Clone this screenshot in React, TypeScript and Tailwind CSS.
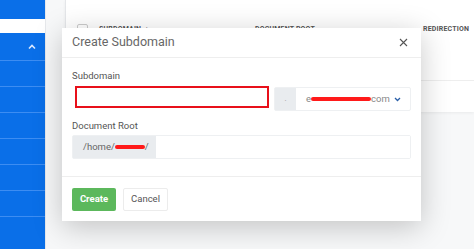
import React from 'react';

const font = { fontFamily: 'Roboto, "Liberation Sans", sans-serif' };

const Sidebar: React.FC = () => {
  const rows = [0, 1, 2, 3, 4, 5, 6];
  return (
    <div className="w-[46px] shrink-0 flex flex-col border-r border-[#e6e8eb]">
      <div className="h-[19px] bg-[#0a6fe8]" />
      <div className="h-[14px] bg-white" />
      <div className="flex-1 bg-[#0a6fe8] flex flex-col">
        <div className="h-[27px] flex items-center justify-end pr-[9px]">
          <svg width="8" height="6" viewBox="0 0 8 6">
            <path d="M1 4.5 L4 1.5 L7 4.5" stroke="#dbe9ff" strokeWidth="1.6" fill="none" />
          </svg>
        </div>
        {rows.map((r) => (
          <div key={r} className="h-[26px] shrink-0 border-t border-[#3d8df2]" />
        ))}
      </div>
    </div>
  );
};

const Redacted: React.FC<{ w: number }> = ({ w }) => (
  <span className="inline-block h-[4px] bg-[#ff1a1a] rounded-full align-middle" style={{ width: w }} />
);

const Modal: React.FC = () => (
  <div className="absolute left-[62px] top-[28px] w-[359px] h-[193px] bg-white shadow-[0_6px_28px_rgba(0,0,0,0.22)] flex flex-col">
    {/* cabecera */}
    <div className="h-[30px] flex items-center justify-between pl-[10px] pr-[13px] border-b border-[#eeeeee]">
      <span className="text-[12.5px] text-[#666]">Create Subdomain</span>
      <svg width="9" height="9" viewBox="0 0 9 9">
        <path d="M1 1 L8 8 M8 1 L1 8" stroke="#555" strokeWidth="1.1" />
      </svg>
    </div>
    {/* cuerpo */}
    <div className="flex-1 px-[10px] pt-[12px] border-b border-[#eeeeee]">
      <div className="text-[9.5px] text-[#555] leading-[12px]">Subdomain</div>
      <div className="flex items-start mt-[4px] h-[25px]">
        <div className="ml-[3px] w-[194px] h-[22px] border-2 border-[#e8101a] bg-white" />
        <div className="ml-[5px] mt-[1px] w-[137px] h-[24px] flex border border-[#eef0f2] rounded-[2px]">
          <div className="w-[21px] bg-[#e9ecef] flex items-center justify-center text-[8px] text-[#999]">.</div>
          <div className="flex-1 flex items-center pl-[10px] pr-[9px] text-[9.5px] text-[#888]">
            <span>e</span>
            <Redacted w={60} />
            <span>com</span>
            <svg className="ml-auto" width="7" height="5" viewBox="0 0 7 5">
              <path d="M1 1 L3.5 3.5 L6 1" stroke="#2a5fa8" strokeWidth="1.3" fill="none" />
            </svg>
          </div>
        </div>
      </div>
      <div className="text-[9.5px] text-[#555] leading-[12px] mt-[9px]">Document Root</div>
      <div className="flex mt-[3px] h-[24px] border border-[#eef0f2] rounded-[2px]">
        <div className="w-[83px] bg-[#e9ecef] flex items-center pl-[10px] text-[9.5px] text-[#666]">
          <span>/home/</span>
          <Redacted w={30} />
          <span>/</span>
        </div>
        <div className="flex-1 bg-white" />
      </div>
    </div>
    {/* pie */}
    <div className="h-[44px] flex items-center gap-[7px] px-[10px]">
      <button className="w-[44px] h-[23px] bg-[#5cb85c] rounded-[2px] text-white text-[9.5px] font-bold">Create</button>
      <button className="w-[45px] h-[23px] bg-white border border-[#ececec] rounded-[2px] text-[#555] text-[9.5px]">Cancel</button>
    </div>
  </div>
);

const App: React.FC = () => {
  return (
    <div className="w-[474px] h-[249px] relative overflow-hidden flex bg-[#f4f5f7]" style={font}>
      <Sidebar />
      <div className="flex-1 pl-[19px] bg-[#f7f8f9]">
        <div className="h-[112px] bg-white border-l border-[#e4e6e9] shadow-[0_1px_3px_rgba(0,0,0,0.06)]">
          <div className="h-[18px]" />
          <div className="flex items-center h-[22px] pl-[11px] text-[7px] font-bold text-[#555] tracking-wide">
            <div className="w-[11px] h-[11px] border border-[#ccc] rounded-[2px] bg-white" />
            <span className="ml-[11px] w-[156px]">SUBDOMAIN ▲</span>
            <span className="w-[168px]">DOCUMENT ROOT</span>
            <span>REDIRECTION</span>
          </div>
          <div className="h-[41px] border-b border-[#eeeeee]" />
        </div>
      </div>
      <Modal />
    </div>
  );
};

export default App;
